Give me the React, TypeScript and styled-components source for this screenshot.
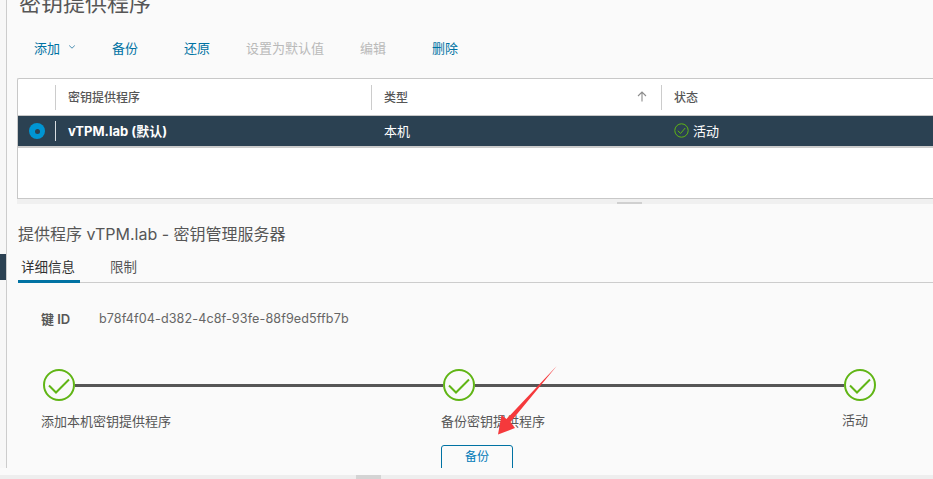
import React from "react";
import styled, { createGlobalStyle } from "styled-components";

const Global = createGlobalStyle`
  html, body { margin: 0; padding: 0; background: #fafafa; }
  body { font-family: "Inter", "Noto Sans CJK SC", sans-serif; }
  * { box-sizing: border-box; }
`;

const Page = styled.div`
  position: relative;
  width: 933px;
  height: 479px;
  overflow: hidden;
  background: #fafafa;
  display: flex;
  flex-direction: column;
`;
const Body = styled.div`
  display: flex;
  height: 468px;
  overflow: hidden;
`;
const Rail = styled.div`
  width: 7px;
  flex: none;
  background: #f7f7f7;
  border-right: 1px solid #cccccc;
  padding-top: 254px;
`;
const RailMark = styled.div`
  width: 6px;
  height: 26px;
  background: #2b4152;
`;
const Main = styled.main`
  flex: 1;
  min-width: 0;
  padding-left: 10px;
`;
const PageTitle = styled.h1`
  margin: -14px 0 0 2px;
  height: 30px;
  font-size: 22px;
  line-height: 30px;
  font-weight: 400;
  color: #565656;
  font-family: "Noto Sans CJK SC", sans-serif;
`;
const Toolbar = styled.div`
  display: flex;
  height: 24px;
  margin: 19px 0 0 0;
  align-items: center;
`;
const ToolButton = styled.button<{ $off?: boolean }>`
  min-width: 72px;
  height: 24px;
  padding: 0 13px;
  border: 0;
  background: transparent;
  display: flex;
  align-items: center;
  justify-content: center;
  gap: 8px;
  font-size: 13px;
  font-family: "Noto Sans CJK SC", sans-serif;
  color: ${(p) => (p.$off ? "#b9b9b9" : "#0072a3")};
  white-space: nowrap;
`;
const MenuButton = styled(ToolButton)`
  padding: 0 11px 0 15px;
`;
const Table = styled.div`
  margin-top: 19px;
  height: 121px;
  background: #fff;
  border-top: 1px solid #c8c8c8;
  border-left: 1px solid #c8c8c8;
  border-bottom: 1px solid #c8c8c8;
  border-top-left-radius: 2px;
`;
const Columns = "37px 316px 290px 1fr";
const HeadRow = styled.div`
  display: grid;
  grid-template-columns: ${Columns};
  height: 36px;
  align-items: center;
`;
const HeadCell = styled.div<{ $sep?: boolean }>`
  position: relative;
  height: 25px;
  display: flex;
  align-items: center;
  justify-content: space-between;
  padding: 0 14px 2px 12px;
  border-left: ${(p) => (p.$sep ? "1px solid #cccccc" : "0")};
  font-size: 12px;
  font-weight: 500;
  color: #565656;
  font-family: "Noto Sans CJK SC", sans-serif;
`;
const DataRow = styled.div`
  display: grid;
  grid-template-columns: ${Columns};
  height: 33px;
  align-items: center;
  background: #2b4152;
  border-top: 1px solid #c8c8c8;
  border-bottom: 2px solid #cccccc;
  color: #fff;
  font-size: 13px;
  font-family: "Noto Sans CJK SC", sans-serif;
`;
const RadioCell = styled.div`
  display: flex;
  justify-content: flex-end;
  padding-right: 10px;
`;
const Radio = styled.span`
  width: 16px;
  height: 16px;
  border-radius: 50%;
  background: #0095d3;
  display: flex;
  align-items: center;
  justify-content: center;
  &::after {
    content: "";
    width: 5px;
    height: 5px;
    border-radius: 50%;
    background: #2b4152;
  }
`;
const NameCell = styled.div`
  height: 20px;
  display: flex;
  align-items: center;
  padding: 0 0 2px 12px;
  border-left: 1px solid #d8dde1;
  font-weight: 700;
  font-size: 13px;
  font-family: "Inter", "Noto Sans CJK SC", sans-serif;
`;
const TextCell = styled.div`
  padding: 0 0 2px 13px;
  display: flex;
  align-items: center;
  gap: 4px;
`;
const Splitter = styled.div`
  position: relative;
  height: 5px;
  background: #f0f0f0;
  &::after {
    content: "";
    position: absolute;
    left: 600px;
    bottom: 0;
    width: 25px;
    height: 2px;
    background: #d0d0d0;
  }
`;
const PanelTitle = styled.h2`
  margin: 18px 0 0 1px;
  height: 24px;
  font-size: 16px;
  line-height: 24px;
  font-weight: 400;
  color: #565656;
  font-family: "Inter", "Noto Sans CJK SC", sans-serif;
`;
const Tabs = styled.div`
  margin-top: 11px;
  height: 26px;
  display: flex;
  border-bottom: 1px solid #cccccc;
  margin-left: 1px;
`;
const Tab = styled.div<{ $active?: boolean }>`
  width: ${(p) => (p.$active ? "62px" : "auto")};
  height: 26px;
  padding-left: 3px;
  margin-right: ${(p) => (p.$active ? "27px" : "0")};
  font-size: 13.5px;
  line-height: 18px;
  color: ${(p) => (p.$active ? "#313131" : "#565656")};
  border-bottom: 3px solid ${(p) => (p.$active ? "#0072a3" : "transparent")};
  font-family: "Noto Sans CJK SC", sans-serif;
`;
const KeyLine = styled.div`
  margin: 26px 0 0 24px;
  display: flex;
  align-items: center;
  height: 18px;
  color: #565656;
`;
const KeyLabel = styled.span`
  width: 58px;
  font-size: 13px;
  font-weight: 600;
  font-family: "Inter", "Noto Sans CJK SC", sans-serif;
`;
const KeyValue = styled.span`
  font-size: 12.6px;
  letter-spacing: 0.1px;
  color: #666666;
`;
const Stepper = styled.div`
  margin: 42px 0 0 24px;
  display: grid;
  grid-template-columns: 400px 401px 1fr;
`;
const Step = styled.div`
  display: flex;
  flex-direction: column;
  align-items: flex-start;
`;
const StepHead = styled.div`
  display: flex;
  align-items: center;
  width: 100%;
  padding-left: 2px;
`;
const StepLine = styled.div`
  flex: 1;
  height: 3px;
  margin-right: -2px;
  background: #565656;
`;
const StepLabel = styled.div`
  margin-top: 10px;
  height: 20px;
  font-size: 13px;
  line-height: 20px;
  color: #565656;
  font-family: "Noto Sans CJK SC", sans-serif;
`;
const LastLabel = styled(StepLabel)`
  margin-top: 9px;
`;
const StepButton = styled.button`
  margin-top: 14px;
  width: 72px;
  height: 28px;
  flex: none;
  padding: 0 0 7px;
  border: 1px solid #0072a3;
  border-radius: 3px;
  background: transparent;
  color: #0079b8;
  font-size: 12px;
  line-height: 14px;
  font-weight: 400;
  font-family: "Noto Sans CJK SC", sans-serif;
`;
const BottomGap = styled.div`
  height: 7px;
`;
const BottomBar = styled.div`
  height: 4px;
  background: #eeeeee;
  padding-left: 356px;
`;
const BottomHandle = styled.div`
  width: 25px;
  height: 4px;
  background: #d4d4d4;
`;
const Annotation = styled.svg`
  position: absolute;
  left: 490px;
  top: 360px;
`;
const Chevron = styled.svg`
  flex: none;
`;
const SmallCheck = styled.svg`
  flex: none;
`;
const BigCheck = styled.svg`
  flex: none;
  display: block;
`;

const Check = () => (
  <BigCheck width="32" height="32" viewBox="0 0 32 32">
    <circle cx="16" cy="16" r="15" fill="none" stroke="#60b515" strokeWidth="2" />
    <path d="M6 16.5 L13 23.5 L26 10.5" fill="none" stroke="#60b515" strokeWidth="2" />
  </BigCheck>
);

export default function App() {
  return (
    <Page>
      <Global />
      <Body>
        <Rail>
          <RailMark />
        </Rail>
        <Main>
          <PageTitle>密钥提供程序</PageTitle>
          <Toolbar>
            <MenuButton>
              添加
              <Chevron width="8" height="6" viewBox="0 0 8 6">
                <path d="M1.2 1.5 L4 4.2 L6.8 1.5" fill="none" stroke="#4d8fb3" strokeWidth="1" />
              </Chevron>
            </MenuButton>
            <ToolButton>备份</ToolButton>
            <ToolButton>还原</ToolButton>
            <ToolButton $off>设置为默认值</ToolButton>
            <ToolButton $off>编辑</ToolButton>
            <ToolButton>删除</ToolButton>
          </Toolbar>
          <Table>
            <HeadRow>
              <div />
              <HeadCell $sep>密钥提供程序</HeadCell>
              <HeadCell $sep>
                类型
                <svg width="10" height="11" viewBox="0 0 10 11">
                  <path d="M5 10.5 V1.5 M1 5 L5 1 L9 5" fill="none" stroke="#8c8c8c" strokeWidth="1.1" />
                </svg>
              </HeadCell>
              <HeadCell $sep>状态</HeadCell>
            </HeadRow>
            <DataRow>
              <RadioCell>
                <Radio />
              </RadioCell>
              <NameCell>vTPM.lab (默认)</NameCell>
              <TextCell>本机</TextCell>
              <TextCell>
                <SmallCheck width="15" height="15" viewBox="0 0 15 15">
                  <circle cx="7.5" cy="7.5" r="6.7" fill="none" stroke="#60b515" strokeWidth="1" />
                  <path d="M3.8 7.8 L6.6 10.4 L11.2 5" fill="none" stroke="#60b515" strokeWidth="1" />
                </SmallCheck>
                活动
              </TextCell>
            </DataRow>
          </Table>
          <Splitter />
          <PanelTitle>提供程序 vTPM.lab - 密钥管理服务器</PanelTitle>
          <Tabs>
            <Tab $active>详细信息</Tab>
            <Tab>限制</Tab>
          </Tabs>
          <KeyLine>
            <KeyLabel>键 ID</KeyLabel>
            <KeyValue>b78f4f04-d382-4c8f-93fe-88f9ed5ffb7b</KeyValue>
          </KeyLine>
          <Stepper>
            <Step>
              <StepHead>
                <Check />
                <StepLine />
              </StepHead>
              <StepLabel>添加本机密钥提供程序</StepLabel>
            </Step>
            <Step>
              <StepHead>
                <Check />
                <StepLine />
              </StepHead>
              <StepLabel>备份密钥提供程序</StepLabel>
              <StepButton>备份</StepButton>
            </Step>
            <Step>
              <StepHead>
                <Check />
              </StepHead>
              <LastLabel>活动</LastLabel>
            </Step>
          </Stepper>
        </Main>
      </Body>
      <BottomGap />
      <BottomBar>
        <BottomHandle />
      </BottomBar>
      <Annotation width="70" height="80" viewBox="490 360 70 80">
        <polygon points="556.7,366 510.5,422 515,428 498,434.5 501.5,415 506.5,419" fill="#f5393c" />
      </Annotation>
    </Page>
  );
}
